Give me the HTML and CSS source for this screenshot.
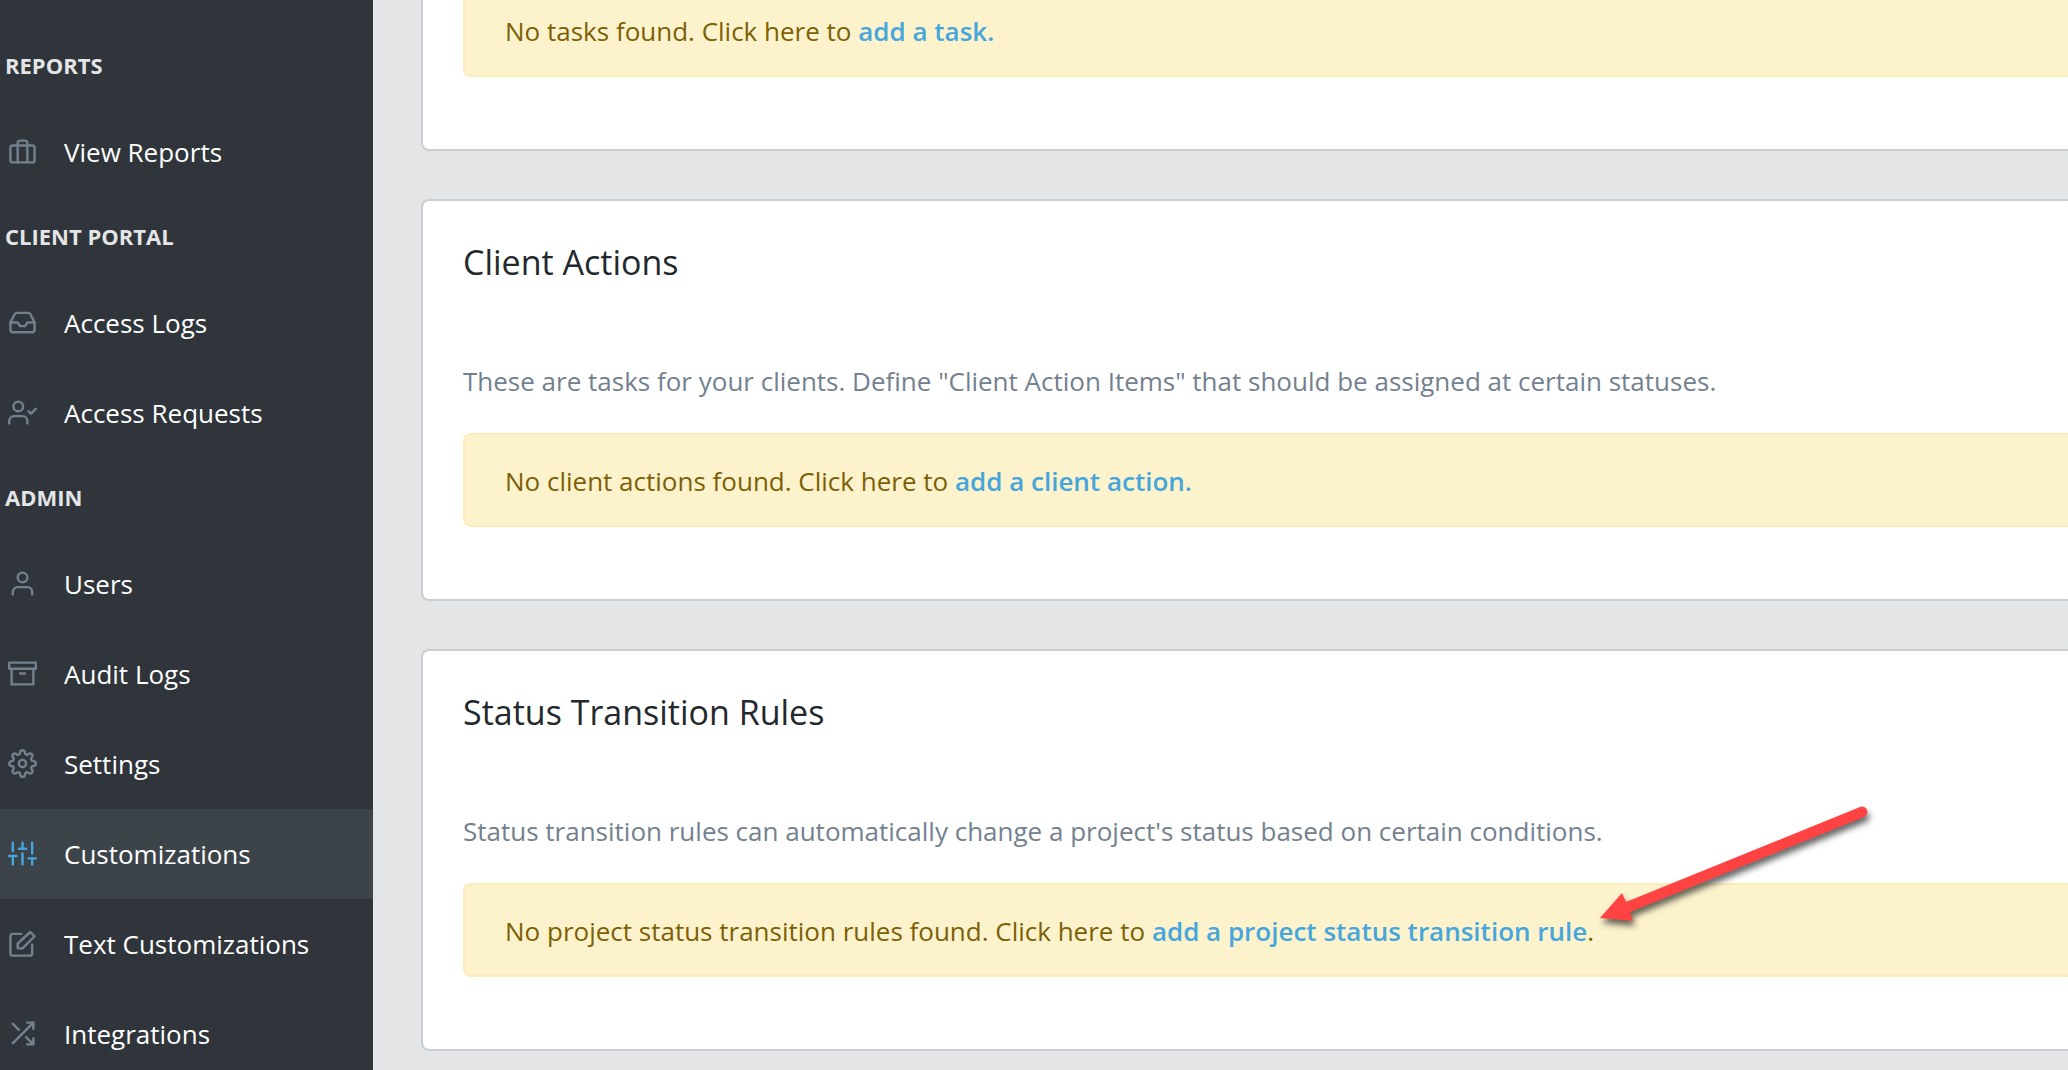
FILE: index.html
```html
<!DOCTYPE html>
<html lang="en">

<head>
    <meta charset="UTF-8">
    <title>Customizations</title>
    <link rel="stylesheet" href="styles.css">
</head>

<body>
    <div class="app">
        <!-- Sidebar -->
        <nav class="sidebar">
            <h2 class="nav-title">Reports</h2>
            <a class="nav-link" href="#">
                <svg class="icon" viewBox="0 0 24 24"><rect x="2" y="7" width="20" height="14" rx="2"/><path d="M16 21V5a2 2 0 0 0-2-2h-4a2 2 0 0 0-2 2v16"/></svg>
                <span>View Reports</span>
            </a>

            <h2 class="nav-title">Client Portal</h2>
            <a class="nav-link" href="#">
                <svg class="icon" viewBox="0 0 24 24"><path d="M22 12h-6l-2 3h-4l-2-3H2"/><path d="M5.45 5.11 2 12v6a2 2 0 0 0 2 2h16a2 2 0 0 0 2-2v-6l-3.45-6.89A2 2 0 0 0 16.76 4H7.24a2 2 0 0 0-1.79 1.11z"/></svg>
                <span>Access Logs</span>
            </a>
            <a class="nav-link" href="#">
                <svg class="icon" viewBox="0 0 24 24"><path d="M16 21v-2a4 4 0 0 0-4-4H5a4 4 0 0 0-4 4v2"/><circle cx="8.5" cy="7" r="4"/><path d="m17 11 2 2 4-4"/></svg>
                <span>Access Requests</span>
            </a>

            <h2 class="nav-title">Admin</h2>
            <a class="nav-link" href="#">
                <svg class="icon" viewBox="0 0 24 24"><path d="M20 21v-2a4 4 0 0 0-4-4H8a4 4 0 0 0-4 4v2"/><circle cx="12" cy="7" r="4"/></svg>
                <span>Users</span>
            </a>
            <a class="nav-link" href="#">
                <svg class="icon" viewBox="0 0 24 24"><path d="M21 8v13H3V8M1 3h22v5H1zM10 12h4"/></svg>
                <span>Audit Logs</span>
            </a>
            <a class="nav-link" href="#">
                <svg class="icon" viewBox="0 0 24 24"><circle cx="12" cy="12" r="3"/><path d="M19.4 15a1.65 1.65 0 0 0 .33 1.82l.06.06a2 2 0 0 1 0 2.83 2 2 0 0 1-2.83 0l-.06-.06a1.65 1.65 0 0 0-1.82-.33 1.65 1.65 0 0 0-1 1.51V21a2 2 0 0 1-2 2 2 2 0 0 1-2-2v-.09A1.65 1.65 0 0 0 9 19.4a1.65 1.65 0 0 0-1.82.33l-.06.06a2 2 0 0 1-2.83 0 2 2 0 0 1 0-2.83l.06-.06a1.65 1.65 0 0 0 .33-1.82 1.65 1.65 0 0 0-1.51-1H3a2 2 0 0 1-2-2 2 2 0 0 1 2-2h.09A1.65 1.65 0 0 0 4.6 9a1.65 1.65 0 0 0-.33-1.82l-.06-.06a2 2 0 0 1 0-2.83 2 2 0 0 1 2.83 0l.06.06a1.65 1.65 0 0 0 1.82.33H9a1.65 1.65 0 0 0 1-1.51V3a2 2 0 0 1 2-2 2 2 0 0 1 2 2v.09a1.65 1.65 0 0 0 1 1.51 1.65 1.65 0 0 0 1.82-.33l.06-.06a2 2 0 0 1 2.83 0 2 2 0 0 1 0 2.83l-.06.06a1.65 1.65 0 0 0-.33 1.82V9a1.65 1.65 0 0 0 1.51 1H21a2 2 0 0 1 2 2 2 2 0 0 1-2 2h-.09a1.65 1.65 0 0 0-1.51 1z"/></svg>
                <span>Settings</span>
            </a>
            <a class="nav-link active" href="#" aria-current="page">
                <svg class="icon" viewBox="0 0 24 24"><path d="M4 21v-7M4 10V3M12 21v-9M12 8V3M20 21v-5M20 12V3M1 14h6M9 8h6M17 16h6"/></svg>
                <span>Customizations</span>
            </a>
            <a class="nav-link" href="#">
                <svg class="icon" viewBox="0 0 24 24"><path d="M11 4H4a2 2 0 0 0-2 2v14a2 2 0 0 0 2 2h14a2 2 0 0 0 2-2v-7"/><path d="M18.5 2.5 22 6 12 16H8v-4z"/></svg>
                <span>Text Customizations</span>
            </a>
            <a class="nav-link" href="#">
                <svg class="icon" viewBox="0 0 24 24"><path d="M16 3h5v5M4 20 21 3M21 16v5h-5M15 15l6 6M4 4l5 5"/></svg>
                <span>Integrations</span>
            </a>
        </nav>

        <!-- Main content -->
        <main class="content">
            <section class="card card-scrolled">
                <div class="alert">No tasks found. Click here to <a href="#">add a task.</a></div>
            </section>

            <section class="card">
                <h1 class="card-title">Client Actions</h1>
                <p class="card-text">These are tasks for your clients. Define "Client Action Items" that should be assigned at certain statuses.</p>
                <div class="alert">No client actions found. Click here to <a href="#">add a client action.</a></div>
            </section>

            <section class="card">
                <h1 class="card-title">Status Transition Rules</h1>
                <p class="card-text">Status transition rules can automatically change a project's status based on certain conditions.</p>
                <div class="alert">No project status transition rules found. Click here to <a href="#">add a project status transition rule</a>.</div>

                <!-- Arrow pointing at the link -->
                <svg class="arrow" viewBox="0 0 290 130"><path d="M10 118 32 93l4 9L270 7a5 5 0 0 1 4 10L40 112l3 9z"/></svg>
            </section>
        </main>
    </div>
</body>

</html>
```

FILE: styles.css
```css
* {
    box-sizing: border-box;
}

body {
    margin: 0;
    font-family: "Segoe UI", "Open Sans", "Noto Sans", sans-serif;
    font-size: 26px;
    line-height: 42px;
    color: #23282c;
    background-color: #e4e5e6;
}

.app {
    display: flex;
    height: 100vh;
    overflow: hidden;
}

/* Sidebar */
.sidebar {
    flex: 0 0 373px;
    padding-top: 26px;
    overflow: hidden;
    background-color: #2f353a;
}

.nav-title {
    margin: 0;
    padding: 18px 5px 21px;
    font-size: 22px;
    font-weight: 700;
    text-transform: uppercase;
    color: #e4e5e6;
}

.nav-link {
    display: flex;
    align-items: center;
    gap: 27px;
    height: 90px;
    padding: 0 8px;
    color: #fff;
    text-decoration: none;
    white-space: nowrap;
}

.nav-link.active {
    background-color: #3c4349;
}

.icon {
    flex: none;
    width: 29px;
    height: 29px;
    margin-bottom: 2px;
    fill: none;
    stroke: #73818f;
    stroke-width: 2;
    stroke-linecap: round;
    stroke-linejoin: round;
}

.active .icon {
    stroke: #46a6dc;
}

/* Cards */
.content {
    flex: 1;
    min-width: 0;
    padding-left: 48px;
}

.card {
    position: relative;
    margin-bottom: 48px;
    padding: 40px 0 72px 40px;
    background-color: #fff;
    border: 2px solid #c8ced3;
    border-right: 0;
    border-radius: 8px 0 0 8px;
}

/* First card is scrolled under the top of the window */
.card-scrolled {
    margin-top: -17px;
    padding-top: 0;
    border-top: 0;
    border-top-left-radius: 0;
}

.card-title {
    margin: 0 0 77px;
    font-size: 34px;
    font-weight: 400;
}

.card-text {
    margin: 0 0 31px;
    color: #73818f;
}

.alert {
    padding: 25px 40px 23px;
    color: #7c6005;
    background-color: #fcf3cd;
    border: 2px solid #fdecb8;
    border-right: 0;
    border-radius: 8px 0 0 8px;
}

.alert a {
    font-weight: 600;
    color: #46a6dc;
    text-decoration: none;
}

.arrow {
    position: absolute;
    top: 149px;
    left: 1167px;
    width: 290px;
    height: 130px;
    overflow: visible;
    fill: #ff4343;
    filter: drop-shadow(2px 5px 3px rgba(0, 0, 0, 0.6));
    pointer-events: none;
}
```
